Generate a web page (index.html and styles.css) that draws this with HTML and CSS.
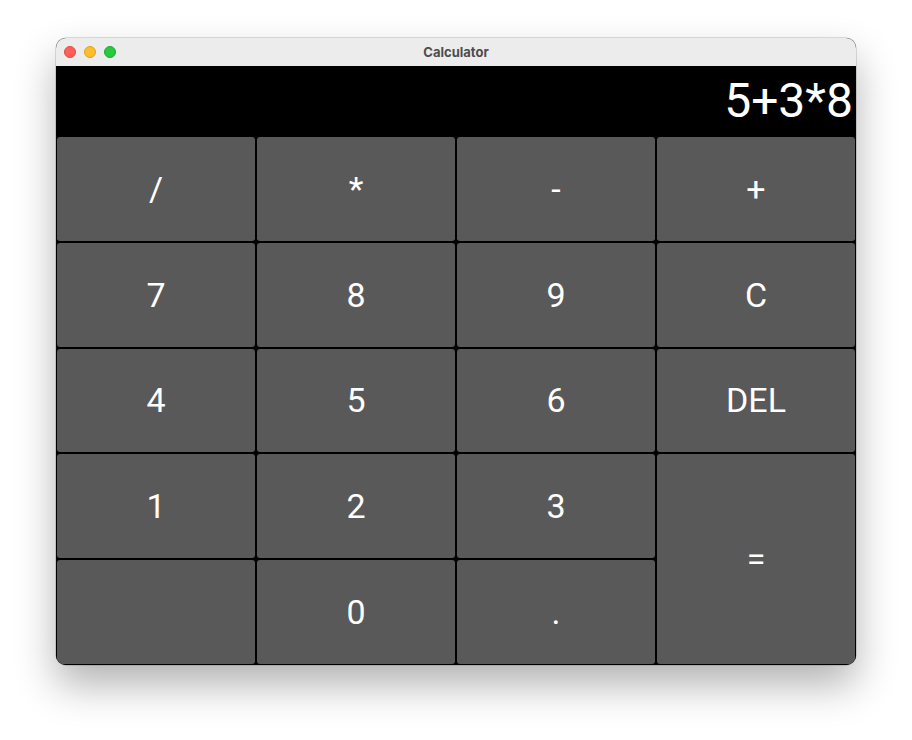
FILE: index.html
```html
<!DOCTYPE html>
<html>
<head>
<meta charset="utf-8">
<title>Calculator</title>
<link rel="stylesheet" href="styles.css">
</head>
<body>
<div class="window">
  <div class="titlebar">
    <div class="lights">
      <span class="light red"></span>
      <span class="light yellow"></span>
      <span class="light green"></span>
    </div>
    <div class="title">Calculator</div>
  </div>
  <div class="display">5+3*8</div>
  <div class="keys">
    <div class="key">/</div>
    <div class="key">*</div>
    <div class="key">-</div>
    <div class="key">+</div>
    <div class="key">7</div>
    <div class="key">8</div>
    <div class="key">9</div>
    <div class="key">C</div>
    <div class="key">4</div>
    <div class="key">5</div>
    <div class="key">6</div>
    <div class="key">DEL</div>
    <div class="key">1</div>
    <div class="key">2</div>
    <div class="key">3</div>
    <div class="key equals">=</div>
    <div class="key"></div>
    <div class="key">0</div>
    <div class="key">.</div>
  </div>
</div>
</body>
</html>
```
FILE: styles.css
```css
html, body {
  margin: 0;
  padding: 0;
  background: #ffffff;
}
body {
  padding-top: 38px;
  padding-left: 56px;
  min-height: 740px;
  box-sizing: border-box;
}
.window {
  width: 800px;
  height: 627px;
  border-radius: 10px;
  overflow: hidden;
  display: flex;
  flex-direction: column;
  background: #000;
  box-shadow: 0 0 0 0.5px rgba(0,0,0,0.25), 0 20px 40px rgba(0,0,0,0.3);
}
.titlebar {
  height: 28px;
  flex: none;
  background: #ececec;
  position: relative;
  display: flex;
  align-items: center;
  justify-content: center;
}
.lights {
  position: absolute;
  left: 8px;
  top: 8px;
  display: flex;
  gap: 8px;
}
.light {
  width: 12px;
  height: 12px;
  border-radius: 50%;
  box-sizing: border-box;
}
.red { background: #ff5f57; border: 0.5px solid #e2463f; }
.yellow { background: #febc2e; border: 0.5px solid #e1a116; }
.green { background: #28c840; border: 0.5px solid #14ae2a; }
.title {
  font-family: Inter, "Liberation Sans", sans-serif;
  font-weight: 700;
  font-size: 13px;
  color: #4d4d4d;
  margin-top: -1px;
}
.display {
  height: 70px;
  flex: none;
  background: #000;
  color: #fff;
  font-family: Roboto, "Liberation Sans", sans-serif;
  font-size: 48px;
  display: flex;
  align-items: center;
  justify-content: flex-end;
  padding-right: 3px;
  box-sizing: border-box;
  line-height: 1;
}
.keys {
  flex: 1;
  display: grid;
  grid-template-columns: repeat(4, 1fr);
  grid-template-rows: repeat(5, 1fr);
  background: #000;
}
.key {
  margin: 1px;
  background: #595959;
  border-radius: 3px;
  color: #fff;
  font-family: Roboto, "Liberation Sans", sans-serif;
  font-size: 34px;
  display: flex;
  align-items: center;
  justify-content: center;
}
.equals {
  grid-column: 4;
  grid-row: 4 / span 2;
}
```
